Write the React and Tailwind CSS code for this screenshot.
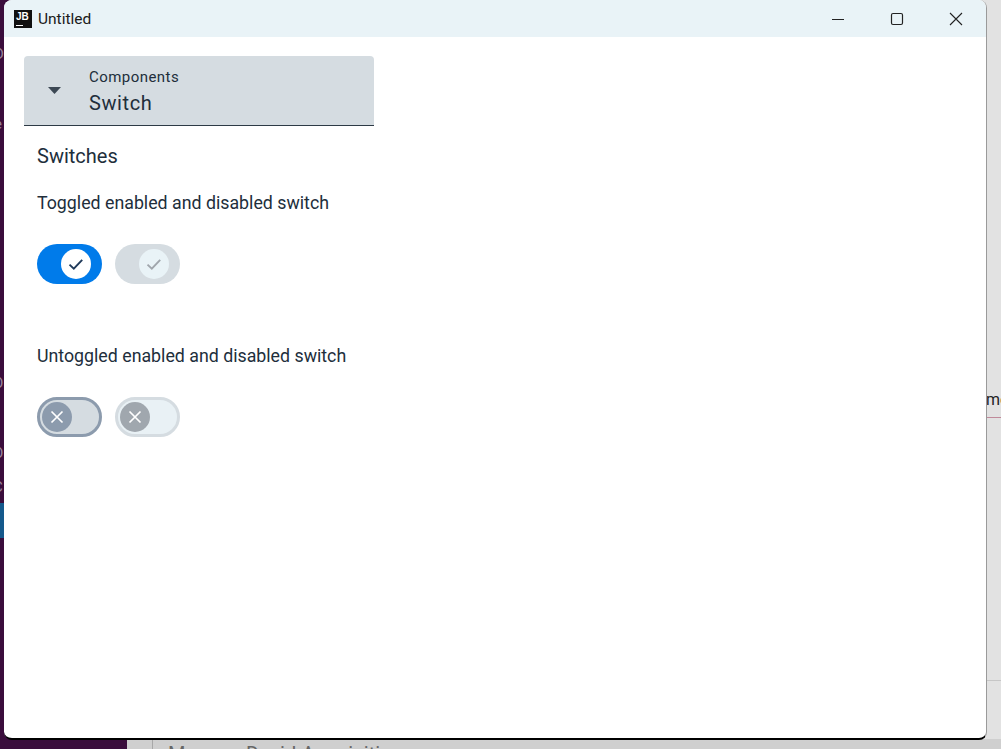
function Check({ color }) {
  return (
    <svg width="16" height="16" viewBox="0 0 16 16" fill="none">
      <path d="M1.5 8.6 L5.8 12.6 L14.2 3.8" stroke={color} strokeWidth="1.9" />
    </svg>
  );
}

function Cross() {
  return (
    <svg width="14" height="14" viewBox="0 0 14 14" fill="none">
      <path d="M1.5 1.5 L12.5 12.5 M12.5 1.5 L1.5 12.5" stroke="#ffffff" strokeWidth="1.7" />
    </svg>
  );
}

function SwitchOn({ track, thumb, check }) {
  return (
    <div className={`flex h-10 w-[65px] items-center justify-end rounded-full pr-[11px] ${track}`}>
      <div className={`flex h-[30px] w-[30px] items-center justify-center rounded-full ${thumb}`}>
        <Check color={check} />
      </div>
    </div>
  );
}

function SwitchOff({ track, thumb }) {
  return (
    <div className={`flex h-10 w-[65px] items-center rounded-full border-[3px] pl-[2px] ${track}`}>
      <div className={`flex h-[30px] w-[30px] items-center justify-center rounded-full ${thumb}`}>
        <Cross />
      </div>
    </div>
  );
}

export default function App() {
  return (
    <div className="relative h-[749px] w-[1001px] overflow-hidden bg-[#e2e2e2] font-['Roboto',sans-serif] text-[#212e3b]">
      {/* desktop behind the window */}
      <div className="absolute left-0 top-0 h-full w-[127px] bg-[#3a0d3c]" />
      <div className="absolute left-[-6px] top-[44px] text-[15px] leading-[20px] text-[#9a859b]">D</div>
      <div className="absolute left-[-6px] top-[114px] text-[15px] leading-[20px] text-[#9a859b]">e</div>
      <div className="absolute left-[-7px] top-[373px] text-[15px] leading-[20px] text-[#9a859b]">O</div>
      <div className="absolute left-[-7px] top-[443px] text-[15px] leading-[20px] text-[#9a859b]">O</div>
      <div className="absolute left-[-7px] top-[477px] text-[15px] leading-[20px] text-[#9a859b]">C</div>
      <div className="absolute left-0 top-[503px] h-[35px] w-[4px] bg-[#15598c]" />
      <div className="absolute left-[127px] top-[739px] h-[10px] w-[874px] bg-[#cfcfcf]" />
      <div className="absolute left-[152px] top-[739px] h-[10px] w-px bg-[#a8a8a8]" />
      <div className="absolute left-[168px] top-[742px] whitespace-nowrap text-[20px] leading-[24px] tracking-[0.15px] text-[#666666]">Manage David Acquisition</div>
      <div className="absolute left-[986px] top-[390px] text-[16px] leading-[20px] text-[#222222]">me</div>
      <div className="absolute left-[986px] top-[417px] h-px w-[15px] bg-[#c08a9a]" />
      <div className="absolute left-[986px] top-[680px] h-px w-[15px] bg-[#c6c6c6]" />

      {/* window */}
      <div className="absolute left-[4px] top-0 flex h-[740px] w-[983px] flex-col overflow-hidden rounded-lg border-b-2 border-r border-b-black border-r-[#9a9a9a] bg-white">
        <div className="flex h-[37px] shrink-0 items-center bg-[#e9f3f7] pl-[10px]">
          <div className="flex h-[18px] w-[18px] flex-col justify-between bg-[#111111] px-[2px] py-[2px]">
            <span className="font-['Liberation_Sans',sans-serif] text-[10px] font-bold leading-[9px] text-white">JB</span>
            <span className="h-px w-[7px] bg-white" />
          </div>
          <span className="ml-[6px] mt-[2px] text-[15.5px] text-[#1b1b1b]">Untitled</span>
          <div className="ml-auto flex items-center pr-[23px]">
            <svg width="14" height="14" viewBox="0 0 14 14" fill="none">
              <path d="M1 7.5 H13" stroke="#222222" strokeWidth="1" />
            </svg>
            <svg className="ml-[45px]" width="14" height="14" viewBox="0 0 14 14" fill="none">
              <rect x="1.5" y="1.5" width="11" height="11" rx="1.5" stroke="#222222" strokeWidth="1.2" />
            </svg>
            <svg className="ml-[45px]" width="14" height="14" viewBox="0 0 14 14" fill="none">
              <path d="M1 1 L13 13 M13 1 L1 13" stroke="#222222" strokeWidth="1.1" />
            </svg>
          </div>
        </div>

        <div className="flex flex-col px-5 pt-[19px]">
          <div className="flex h-[70px] w-[350px] items-center rounded-t-[4px] border-b border-b-[#2d3a45] bg-[#d5dce1]">
            <svg className="ml-6" width="13" height="7" viewBox="0 0 13 7">
              <path d="M0 0 H13 L6.5 7 Z" fill="#3c4854" />
            </svg>
            <div className="ml-[28px] flex flex-col pt-[3px]">
              <span className="text-[15px] leading-[20px] tracking-[0.45px]">Components</span>
              <span className="mt-[2px] text-xl leading-[28px] tracking-[0.6px]">Switch</span>
            </div>
          </div>

          <div className="flex flex-col pl-[13px]">
            <h2 className="mt-[18px] text-xl font-normal leading-[24px]">Switches</h2>
            <p className="mt-[23px] text-[17.77px] leading-[24px]">Toggled enabled and disabled switch</p>
            <div className="mt-[29px] flex gap-[13px]">
              <SwitchOn track="bg-[#007bea]" thumb="bg-white" check="#1f3a5a" />
              <SwitchOn track="bg-[#d5dce1]" thumb="bg-[#e9f3f7]" check="#a0a6ac" />
            </div>
            <p className="mt-[60px] text-[17.77px] leading-[24px]">Untoggled enabled and disabled switch</p>
            <div className="mt-[29px] flex gap-[13px]">
              <SwitchOff track="border-[#8c9bad] bg-[#d5dce1]" thumb="bg-[#8c9bad]" />
              <SwitchOff track="border-[#d5dce1] bg-[#e9f1f5]" thumb="bg-[#a0a7ae]" />
            </div>
          </div>
        </div>
      </div>
    </div>
  );
}
